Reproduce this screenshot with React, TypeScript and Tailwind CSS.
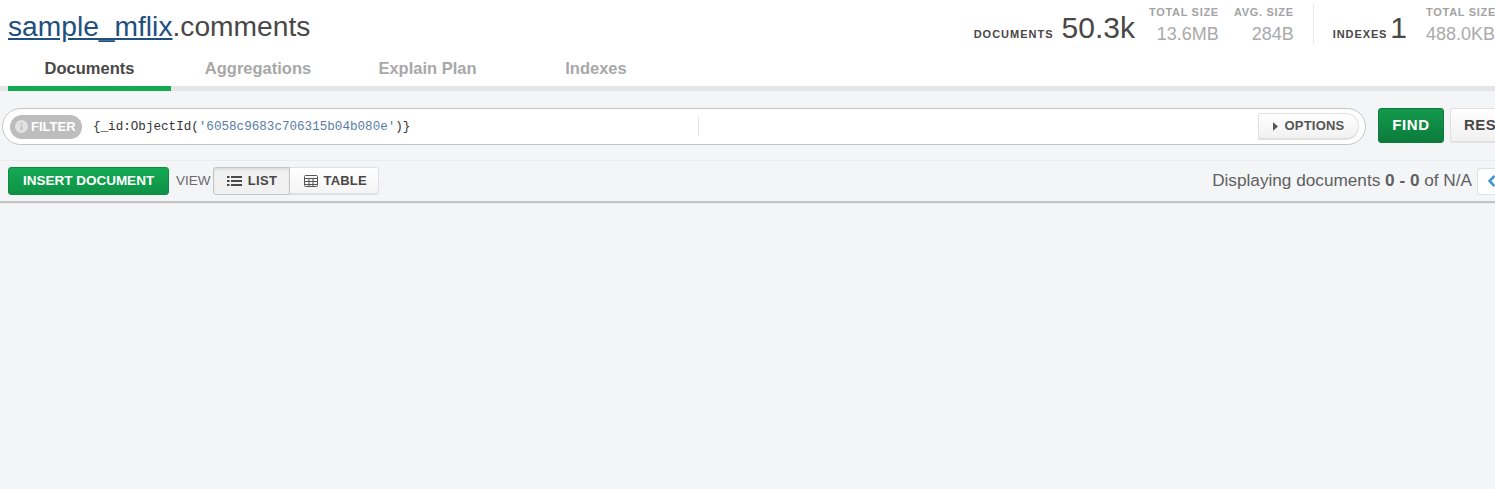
function StatLabel({ children }: { children: string }) {
  return <span className="text-[11px] font-bold leading-[12px] tracking-[0.7px] text-[#a3a3a3]">{children}</span>;
}

function StatValue({ children }: { children: string }) {
  return <span className="mt-[6px] text-[18px] leading-[20px] text-[#aaaaaa]">{children}</span>;
}

export default function App() {
  return (
    <div className="h-[489px] w-[1495px] overflow-hidden bg-[#f4f5f7] font-['Liberation_Sans',sans-serif] text-[#494747]">
      <div className="bg-white">
        <div className="flex h-[57px] justify-between">
          <h1 className="pl-2 pt-[10px] text-[28.2px] leading-[32px] text-[#494747]">
            <span className="text-[#21507f] underline">sample_mflix</span>.comments
          </h1>
          <div className="-mr-[1px] flex h-[44px] shrink-0 items-end whitespace-nowrap pt-1">
            <div className="flex items-baseline gap-[8px]">
              <span className="text-[11px] font-bold tracking-[1px] text-[#494747]">DOCUMENTS</span>
              <span className="text-[30px] leading-[32px]">50.3k</span>
            </div>
            <div className="ml-[14px] flex flex-col items-end">
              <StatLabel>TOTAL SIZE</StatLabel>
              <StatValue>13.6MB</StatValue>
            </div>
            <div className="ml-[15px] flex flex-col items-end">
              <StatLabel>AVG. SIZE</StatLabel>
              <StatValue>284B</StatValue>
            </div>
            <div className="ml-[19px] h-[40px] w-px bg-[#e8e8e8]" />
            <div className="ml-[19px] flex items-baseline gap-[3px]">
              <span className="text-[11px] font-bold tracking-[0.9px] text-[#494747]">INDEXES</span>
              <span className="text-[30px] leading-[32px]">1</span>
            </div>
            <div className="ml-[19px] flex flex-col items-start">
              <StatLabel>TOTAL SIZE</StatLabel>
              <StatValue>488.0KB</StatValue>
            </div>
          </div>
        </div>
        <div className="flex h-[34px] border-b-[5px] border-[#e4e4e4] pl-2 text-[16.5px] font-bold leading-[22px]">
          <div className="relative w-[163px] text-center text-[#494747]">
            Documents
            <div className="absolute bottom-[-5px] left-0 right-0 h-[5px] bg-[#13aa52]" />
          </div>
          <div className="w-[174px] text-center text-[#a8a8a8]">Aggregations</div>
          <div className="w-[165px] text-center text-[#a8a8a8]">Explain Plan</div>
          <div className="w-[172px] text-center text-[#a8a8a8]">Indexes</div>
        </div>
      </div>
      <div className="flex h-[70px] items-center border-b border-[#ebebed] pl-[2px]">
        <div className="mt-[2px] flex h-[37px] w-[1364px] shrink-0 items-center rounded-[19px] border border-[#c5c5c5] bg-white pl-[7px] pr-[6px]">
          <div className="flex h-[24px] w-[72px] items-center gap-[3px] rounded-[12px] bg-[#bdbdbd] pl-[5px] text-[13px] font-bold text-white">
            <svg viewBox="0 0 14 14" className="h-[13px] w-[13px] shrink-0">
              <circle cx="7" cy="7" r="7" fill="#e2e2e2" />
              <rect x="6" y="6" width="2" height="5" fill="#bdbdbd" />
              <rect x="6" y="3" width="2" height="2" fill="#bdbdbd" />
            </svg>
            FILTER
          </div>
          <div className="ml-[11px] w-[606px] border-r border-[#e4e4e4] pt-[1px] font-['Liberation_Mono',monospace] text-[12.6px] leading-[18px] text-[#333]">
            {'{_id:ObjectId('}
            <span className="text-[#5a7ca6]">'6058c9683c706315b04b080e'</span>
            {')}'}
          </div>
          <div className="ml-auto flex h-[27px] w-[101px] items-center justify-center gap-[7px] rounded-r-[13px] rounded-l-[2px] border border-b-[2px] border-[#e0e0e0] bg-linear-to-b from-white to-[#f1f1f1] text-[13px] font-bold tracking-[0.2px] text-[#555]">
            <svg viewBox="0 0 6 10" className="h-[9px] w-[5px] shrink-0">
              <polygon points="0,0 6,5 0,10" fill="#555" />
            </svg>
            OPTIONS
          </div>
        </div>
        <div className="ml-[12px] flex h-[35px] w-[66px] shrink-0 items-center justify-center rounded-[3px] border border-[#0c7b3c] bg-linear-to-b from-[#139a4c] to-[#0c7b3c] text-[15px] font-bold tracking-[0.6px] text-white">FIND</div>
        <div className="ml-[6px] flex h-[35px] w-[80px] shrink-0 items-center rounded-l-[3px] border border-b-[2px] border-[#e0e0e0] bg-linear-to-b from-white to-[#f1f1f1] pl-[13px] text-[15px] font-bold tracking-[0.5px] text-[#494747]">RES</div>
      </div>
      <div className="flex h-[40px] items-center justify-between pl-2 shadow-[0_2px_1px_rgba(0,0,0,0.2)]">
        <div className="flex items-center">
          <div className="flex h-[28px] w-[161px] items-center justify-center rounded-[3px] border border-[#0e8a45] bg-linear-to-b from-[#13aa52] to-[#0f9147] text-[13.5px] font-bold text-white">INSERT DOCUMENT</div>
          <span className="ml-[7px] text-[13.5px] text-[#6a6a6a]">VIEW</span>
          <div className="ml-[2px] flex h-[28px] w-[77px] items-center justify-center gap-[6px] rounded-l-[3px] border border-[#c4c4c4] bg-[#f1f1f1] pl-[2px] text-[13px] font-bold tracking-[0.3px] shadow-[inset_0_2px_2px_rgba(0,0,0,0.08)]">
            <svg viewBox="0 0 15 12" className="h-[12px] w-[15px] shrink-0" fill="#494747">
              <rect x="0" y="1" width="2.5" height="2" />
              <rect x="4" y="1" width="11" height="2" />
              <rect x="0" y="5" width="2.5" height="2" />
              <rect x="4" y="5" width="11" height="2" />
              <rect x="0" y="9" width="2.5" height="2" />
              <rect x="4" y="9" width="11" height="2" />
            </svg>
            LIST
          </div>
          <div className="flex h-[28px] w-[89px] items-center gap-[6px] rounded-r-[3px] border border-b-[2px] border-l-0 border-[#e0e0e0] bg-linear-to-b from-white to-[#f4f4f4] pl-[14px] text-[13px] font-bold tracking-[0.2px]">
            <svg viewBox="0 0 14 12" className="h-[12px] w-[14px] shrink-0" fill="none" stroke="#555" strokeWidth="1">
              <rect x="0.5" y="0.5" width="13" height="11" rx="1" />
              <path d="M0.5 3.5H13.5M0.5 6.5H13.5M0.5 9.5H13.5M5 3.5V11.5M9 3.5V11.5" />
            </svg>
            TABLE
          </div>
        </div>
        <div className="flex shrink-0 items-center">
          <span className="whitespace-nowrap pb-[1px] text-[17.2px] text-[#5f5f5f]">
            Displaying documents <b>0 - 0</b> of N/A
          </span>
          <div className="ml-[5px] flex h-[27px] w-[18px] shrink-0 items-center overflow-hidden rounded-l-[3px] border border-r-0 border-[#e0e0e0] bg-white pl-[10px]">
            <svg viewBox="0 0 8 12" className="h-[12px] w-[8px] shrink-0">
              <polyline points="6.5,1 1.5,6 6.5,11" fill="none" stroke="#3d94d8" strokeWidth="2.5" />
            </svg>
          </div>
        </div>
      </div>
    </div>
  );
}
